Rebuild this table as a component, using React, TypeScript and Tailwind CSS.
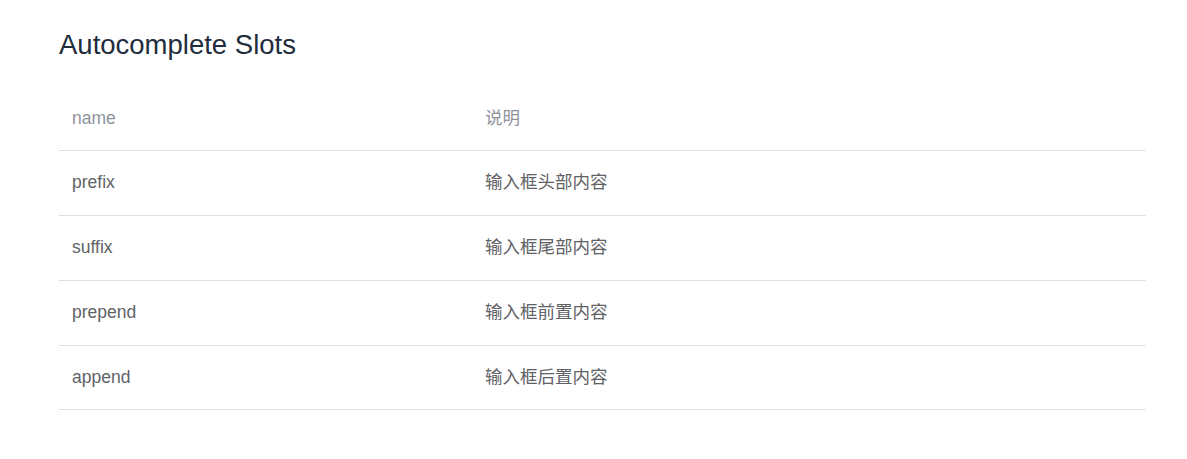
import React from 'react';

const rows = [
  { name: 'prefix', desc: '输入框头部内容' },
  { name: 'suffix', desc: '输入框尾部内容' },
  { name: 'prepend', desc: '输入框前置内容' },
  { name: 'append', desc: '输入框后置内容' },
];

export default function App() {
  return (
    <div className="min-h-screen bg-white px-[59px] pt-[26px]" style={{ fontFamily: '"Liberation Sans", Arial, "Noto Sans CJK SC", sans-serif' }}>
      <h3 className="text-[27.5px] leading-[38px] text-[#1f2d3d] font-normal">Autocomplete Slots</h3>
      <table className="w-[1087px] mt-[22px] border-collapse text-[17.5px]">
        <thead>
          <tr className="border-b border-[#dcdfe6]">
            <th className="w-[414px] h-[64px] pl-[13px] pr-[12px] text-left font-normal text-[#909399]">name</th>
            <th className="h-[64px] px-[12px] text-left font-normal text-[#909399]">说明</th>
          </tr>
        </thead>
        <tbody>
          {rows.map((r, i) => (
            <tr key={r.name} className={i === rows.length - 1 ? 'h-[64px] border-b border-[#dcdfe6]' : 'h-[65px] border-b border-[#dcdfe6]'}>
              <td className="pl-[13px] pr-[12px] text-[#606266]">{r.name}</td>
              <td className="px-[12px] text-[#606266]">{r.desc}</td>
            </tr>
          ))}
        </tbody>
      </table>
    </div>
  );
}
